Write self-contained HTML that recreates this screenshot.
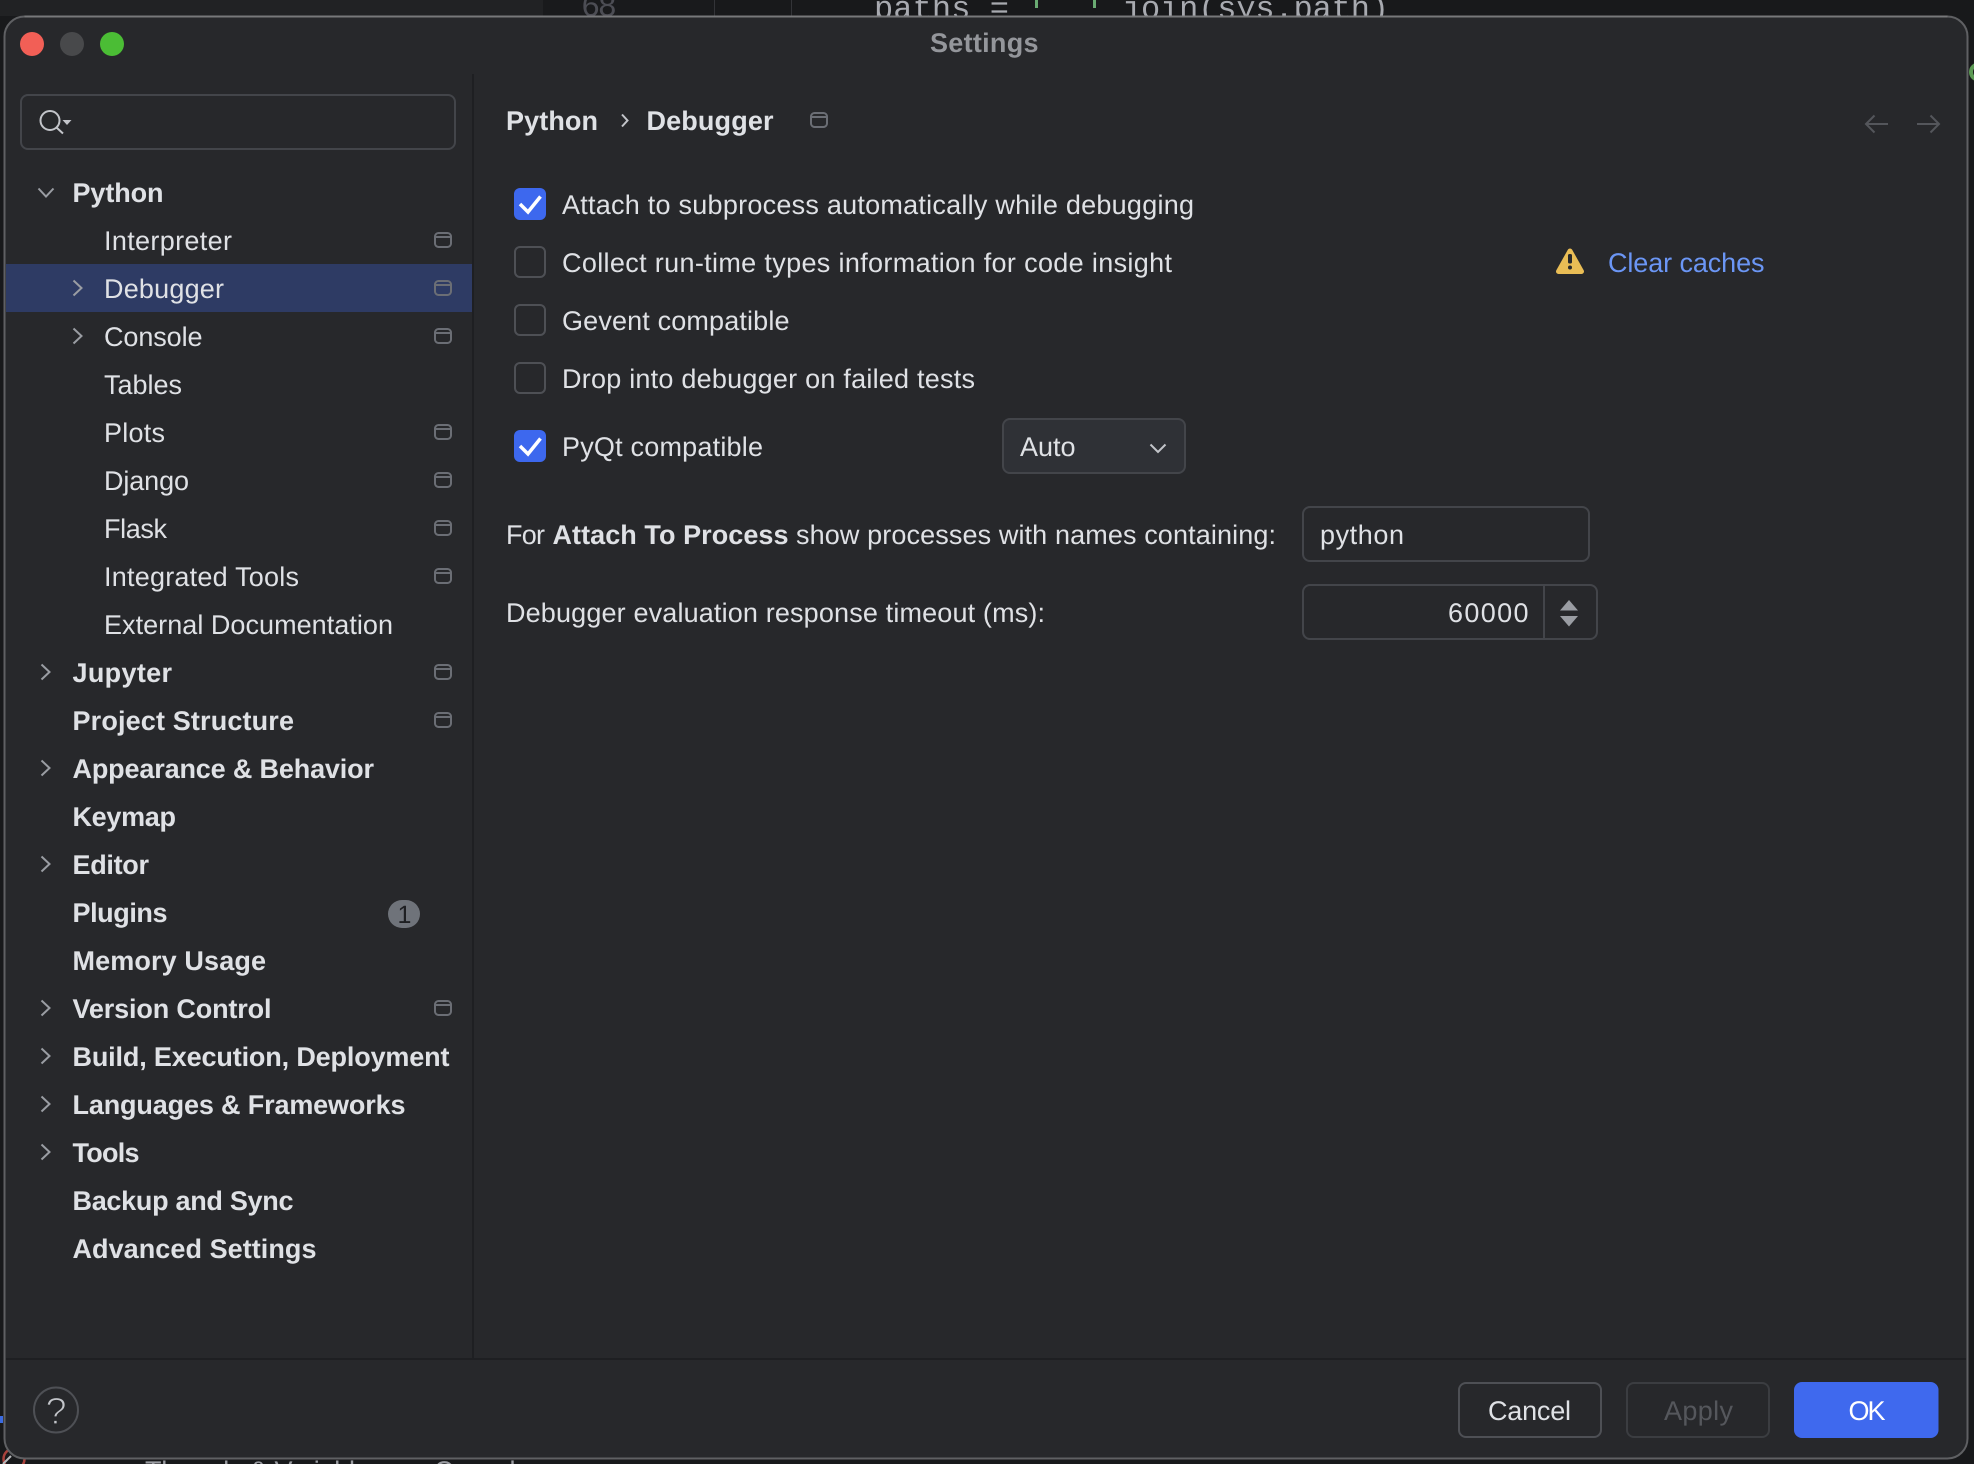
<!DOCTYPE html>
<html lang="en">
<head>
<meta charset="utf-8">
<title>Settings</title>
<style>
html,body{margin:0;padding:0;background:#1a1b1e;width:1974px;height:1464px;overflow:hidden}
svg{display:block}
text{font-family:"Liberation Sans",sans-serif;font-size:27px;fill:#dfe1e5;white-space:pre;text-rendering:geometricPrecision}
.b{font-weight:700}
.m{font-family:"Liberation Mono",monospace;font-size:32px;fill:#a8aab0}
.ic{fill:none;stroke:#6b6e75;stroke-width:2}
.ch{fill:none;stroke:#9a9da3;stroke-width:2}
</style>
</head>
<body>
<svg width="1974" height="1464" viewBox="0 0 1974 1464" xmlns="http://www.w3.org/2000/svg">
<defs>
<g id="pi"><rect class="ic" x="435" y="-7" width="16" height="14" rx="3.5"/><path class="ic" d="M435 -3H451"/></g>
<path id="cr" class="ch" d="M41.500 -7.500L49.500 0L41.500 7.500"/>
<path id="cr1" class="ch" d="M73.500 -7.500L81.500 0L73.500 7.500"/>
</defs>

<!-- background behind the dialog -->
<rect width="1974" height="1464" fill="#18191b"/>
<rect x="0" y="0" width="543" height="16" fill="#212224"/>
<rect x="543" y="0" width="171" height="16" fill="#191a1c"/>
<rect x="714" y="0" width="1" height="16" fill="#333438"/>
<rect x="791" y="0" width="1" height="16" fill="#333438"/>
<text class="m" x="581" y="16" textLength="36" style="fill:#4c4d54">68</text>
<text class="m" x="874" y="18" textLength="135">paths =</text>
<text class="m" x="1122" y="18" textLength="267">join(sys.path)</text>
<rect x="1035" y="0" width="3" height="8" fill="#6aab73"/>
<rect x="1093" y="0" width="3" height="8" fill="#6aab73"/>
<text x="145" y="1480" textLength="238" style="fill:#9a9ca2">Threads &amp; Variables</text>
<text x="434" y="1480" textLength="96" style="fill:#9a9ca2">Console</text>
<ellipse cx="1978" cy="72" rx="7" ry="7.500" fill="none" stroke="#5c9a54" stroke-width="4"/>
<rect x="0" y="1416" width="3" height="7" fill="#3b6ae0"/>
<circle cx="14" cy="1459" r="10.500" fill="none" stroke="#a8423c" stroke-width="2.500"/>
<path d="M3 1464L11 1456" stroke="#b8babd" stroke-width="2"/>

<!-- dialog -->
<rect x="4.500" y="16.500" width="1963" height="1442" rx="20" fill="#27282b" stroke="#5f6063" stroke-width="2"/>
<path d="M24.500 16.500H1947.500" stroke="#77787a" stroke-width="2"/>

<!-- traffic lights -->
<circle cx="32" cy="44" r="12" fill="#f25f56"/>
<circle cx="72" cy="44" r="12" fill="#48494b"/>
<circle cx="112" cy="44" r="12" fill="#4bbd35"/>
<text class="b" x="930" y="52" textLength="108.500" style="fill:#94969b">Settings</text>

<!-- dividers -->
<rect x="472" y="74" width="2" height="1286" fill="#1e1f22"/>
<rect x="6" y="1358" width="1960" height="2" fill="#1e1f22"/>

<!-- search -->
<rect x="21" y="95" width="434" height="54" rx="7" fill="none" stroke="#43454a" stroke-width="2"/>
<circle cx="50" cy="120.500" r="9.500" fill="none" stroke="#c3c5ca" stroke-width="2"/>
<path d="M56.500 127.500L63 133.500" fill="none" stroke="#c3c5ca" stroke-width="2"/>
<path d="M62.500 120H71.500L67 125Z" fill="#c3c5ca"/>

<!-- sidebar selection -->
<rect x="6" y="264" width="466" height="48" fill="#2e3b64"/>

<!-- sidebar chevrons -->
<path class="ch" d="M38.500 188.500L46 196.500L53.500 188.500"/>
<use href="#cr1" y="288"/>
<use href="#cr1" y="336"/>
<use href="#cr" y="672"/>
<use href="#cr" y="768"/>
<use href="#cr" y="864"/>
<use href="#cr" y="1008"/>
<use href="#cr" y="1056"/>
<use href="#cr" y="1104"/>
<use href="#cr" y="1152"/>

<!-- sidebar project icons -->
<use href="#pi" y="240"/>
<use href="#pi" y="288"/>
<use href="#pi" y="336"/>
<use href="#pi" y="432"/>
<use href="#pi" y="480"/>
<use href="#pi" y="528"/>
<use href="#pi" y="576"/>
<use href="#pi" y="672"/>
<use href="#pi" y="720"/>
<use href="#pi" y="1008"/>

<!-- sidebar text -->
<text class="b" x="72.500" y="202" textLength="91">Python</text>
<text x="104" y="250" textLength="128">Interpreter</text>
<text x="104" y="298" textLength="120">Debugger</text>
<text x="104" y="346" textLength="98.500">Console</text>
<text x="104" y="394" textLength="78">Tables</text>
<text x="104" y="442" textLength="61">Plots</text>
<text x="104" y="490" textLength="85">Django</text>
<text x="104" y="538" textLength="63">Flask</text>
<text x="104" y="586" textLength="195">Integrated Tools</text>
<text x="104" y="634" textLength="289">External Documentation</text>
<text class="b" x="72.500" y="682" textLength="99.500">Jupyter</text>
<text class="b" x="72.500" y="730" textLength="221.500">Project Structure</text>
<text class="b" x="72.500" y="778" textLength="301.500">Appearance &amp; Behavior</text>
<text class="b" x="72.500" y="826" textLength="103.500">Keymap</text>
<text class="b" x="72.500" y="874" textLength="76.500">Editor</text>
<text class="b" x="72.500" y="922" textLength="95">Plugins</text>
<text class="b" x="72.500" y="970" textLength="193.500">Memory Usage</text>
<text class="b" x="72.500" y="1018" textLength="199">Version Control</text>
<text class="b" x="72.500" y="1066" textLength="377">Build, Execution, Deployment</text>
<text class="b" x="72.500" y="1114" textLength="333">Languages &amp; Frameworks</text>
<text class="b" x="72.500" y="1162" textLength="67">Tools</text>
<text class="b" x="72.500" y="1210" textLength="221">Backup and Sync</text>
<text class="b" x="72.500" y="1258" textLength="244">Advanced Settings</text>

<!-- plugins badge -->
<rect x="388" y="900" width="32" height="28" rx="14" fill="#6f737a"/>
<text x="397.500" y="923" style="font-size:25px;fill:#1e1f22">1</text>

<!-- breadcrumb -->
<text class="b" x="506" y="130" textLength="92">Python</text>
<path class="ch" style="stroke:#c3c5ca" d="M622 114.500L627.500 120.500L622 126.500"/>
<text class="b" x="646.500" y="130" textLength="127">Debugger</text>
<rect class="ic" x="811" y="113" width="16" height="14" rx="3.500"/>
<path class="ic" d="M811 117H827"/>

<!-- nav arrows -->
<path d="M1888 124H1866M1874.500 115.500L1866 124L1874.500 132.500" fill="none" stroke="#54565b" stroke-width="2"/>
<path d="M1917 124H1939M1930.500 115.500L1939 124L1930.500 132.500" fill="none" stroke="#54565b" stroke-width="2"/>

<!-- checkboxes -->
<rect x="514" y="188" width="32" height="32" rx="6" fill="#3d68ee"/>
<path d="M520 204L528 212L540.500 196.500" fill="none" stroke="#fff" stroke-width="3.500"/>
<text x="562" y="214" textLength="632">Attach to subprocess automatically while debugging</text>

<rect x="515" y="247" width="30" height="30" rx="5" fill="none" stroke="#4e5055" stroke-width="2"/>
<text x="562" y="272" textLength="610">Collect run-time types information for code insight</text>
<path d="M1570 251L1581.500 271.500H1558.500Z" fill="#e9bd55" stroke="#e9bd55" stroke-width="5" stroke-linejoin="round"/>
<rect x="1568" y="254" width="4" height="9.500" rx="1.500" fill="#27282b"/>
<circle cx="1570" cy="267.500" r="2" fill="#27282b"/>
<text x="1608" y="272" textLength="156.500" style="fill:#6b96f5">Clear caches</text>

<rect x="515" y="305" width="30" height="30" rx="5" fill="none" stroke="#4e5055" stroke-width="2"/>
<text x="562" y="330" textLength="227.500">Gevent compatible</text>

<rect x="515" y="363" width="30" height="30" rx="5" fill="none" stroke="#4e5055" stroke-width="2"/>
<text x="562" y="388" textLength="413">Drop into debugger on failed tests</text>

<rect x="514" y="430" width="32" height="32" rx="6" fill="#3d68ee"/>
<path d="M520 446L528 454L540.500 438.500" fill="none" stroke="#fff" stroke-width="3.500"/>
<text x="562" y="456" textLength="201">PyQt compatible</text>

<!-- combo -->
<rect x="1003" y="419" width="182" height="54" rx="7" fill="#2f3136" stroke="#43454a" stroke-width="2"/>
<text x="1020" y="456" textLength="55.500">Auto</text>
<path class="ch" style="stroke:#c3c5ca" d="M1150.500 444.500L1158 452L1165.500 444.500"/>

<!-- attach to process -->
<text x="506" y="544" textLength="39">For</text>
<text class="b" x="552.500" y="544" textLength="236">Attach To Process</text>
<text x="796" y="544" textLength="480">show processes with names containing:</text>
<rect x="1303" y="507" width="286" height="54" rx="7" fill="none" stroke="#43454a" stroke-width="2"/>
<text x="1320" y="544" textLength="84">python</text>

<!-- timeout -->
<text x="506" y="622" textLength="539">Debugger evaluation response timeout (ms):</text>
<rect x="1303" y="585" width="294" height="54" rx="7" fill="none" stroke="#43454a" stroke-width="2"/>
<rect x="1543" y="585" width="2" height="54" fill="#43454a"/>
<text x="1448" y="622" textLength="80.500">60000</text>
<path d="M1569 600L1578 610.500H1560Z" fill="#9a9da3"/>
<path d="M1569 626.500L1578 616H1560Z" fill="#9a9da3"/>

<!-- help -->
<ellipse cx="56" cy="1410" rx="22" ry="22.500" fill="none" stroke="#4e5055" stroke-width="2"/>
<text x="45.500" y="1424" style="font-size:38px;fill:#c3c5ca;stroke:#27282b;stroke-width:1.200">?</text>

<!-- buttons -->
<rect x="1459" y="1383" width="142" height="54" rx="7" fill="none" stroke="#4e5055" stroke-width="2"/>
<text x="1488" y="1420" textLength="83">Cancel</text>
<rect x="1627" y="1383" width="142" height="54" rx="7" fill="none" stroke="#3b3d41" stroke-width="2"/>
<text x="1664" y="1420" textLength="69" style="fill:#55575c">Apply</text>
<rect x="1794" y="1382" width="144.500" height="56" rx="8" fill="#3f69ee"/>
<text x="1848.500" y="1420" textLength="37" style="fill:#fff">OK</text>
</svg>
</body>
</html>
